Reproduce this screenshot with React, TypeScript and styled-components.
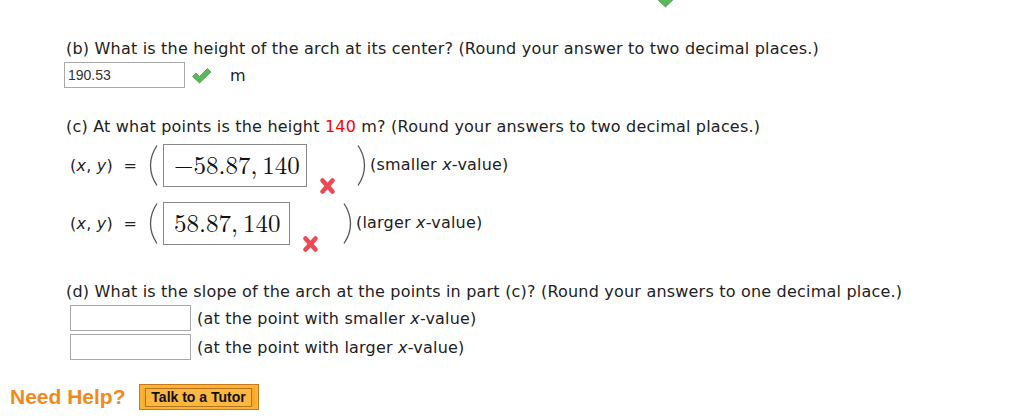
import React from "react";
import styled, { createGlobalStyle } from "styled-components";

const GlobalStyle = createGlobalStyle`
  body {
    margin: 0;
    background: #ffffff;
    font-family: "DejaVu Sans", Verdana, sans-serif;
    color: #222222;
  }
`;

const Page = styled.div`
  width: 1034px;
  height: 420px;
  position: relative;
  overflow: hidden;
`;

const Content = styled.div`
  padding: 39px 0 0 66px;
  font-size: 16px;
  letter-spacing: 0.2px;
  i {
    font-style: italic;
  }
`;

const TopCheck = styled.div`
  position: absolute;
  left: 657px;
  top: -9px;
`;

const Question = styled.div<{ $mt?: number }>`
  line-height: 20px;
  height: 20px;
  white-space: nowrap;
  margin-top: ${(p) => p.$mt ?? 0}px;
`;

const Red = styled.span`
  color: #ff0000;
`;

const AnswerRow = styled.div`
  display: flex;
  align-items: center;
  margin: 3px 0 0 -2px;
  height: 26px;
`;

const TextBox = styled.div<{ $w?: number }>`
  box-sizing: border-box;
  width: ${(p) => p.$w ?? 121}px;
  height: 26px;
  border: 1px solid #a9a9a9;
  font-family: "Liberation Sans", Arial, sans-serif;
  font-size: 14px;
  letter-spacing: 0;
  line-height: 24px;
  padding-left: 3px;
  color: #333333;
`;

const MarkWrap = styled.span`
  display: flex;
  margin-left: 6px;
`;

const Unit = styled.span`
  margin-left: 18px;
`;

const PointRow = styled.div<{ $mt: number }>`
  display: flex;
  align-items: center;
  height: 43px;
  margin: ${(p) => p.$mt}px 0 0 4px;
`;

const PointLabel = styled.div`
  width: 77px;
  white-space: nowrap;
`;

const Paren = styled.div`
  align-self: stretch;
  width: 14px;
  display: flex;
  justify-content: center;
  svg {
    display: block;
  }
`;

const MathBox = styled.div<{ $w: number }>`
  box-sizing: border-box;
  width: ${(p) => p.$w}px;
  height: 43px;
  border: 1px solid #888888;
  font-family: "Latin Modern Roman", "Liberation Serif", serif;
  font-size: 25px;
  letter-spacing: 0;
  line-height: 37px;
  padding-left: 10px;
  color: #111111;
  margin-left: 2px;
  white-space: nowrap;
`;

const MarkSlot = styled.div<{ $w: number }>`
  align-self: stretch;
  width: ${(p) => p.$w}px;
  position: relative;
`;

const CrossSpot = styled.div`
  position: absolute;
  left: 12px;
  top: 33px;
`;

const Hint = styled.div`
  margin-left: 2px;
  margin-top: -2px;
  white-space: nowrap;
`;

const SlopeRow = styled.div`
  display: flex;
  align-items: center;
  margin: 3px 0 0 4px;
`;

const SlopeLabel = styled.span`
  margin-left: 6px;
`;

const HelpBar = styled.div`
  display: flex;
  align-items: center;
  position: absolute;
  left: 10px;
  top: 384px;
`;

const NeedHelp = styled.span`
  font-family: "Liberation Sans", Arial, sans-serif;
  font-weight: bold;
  font-size: 21px;
  color: #f28a1b;
`;

const TutorButton = styled.button`
  margin-left: 13px;
  box-sizing: border-box;
  width: 120px;
  height: 26px;
  background: #f9a928;
  border: 1px solid #c9781c;
  box-shadow: inset 0 0 0 3px #fbb335;
  font-family: "Liberation Sans", Arial, sans-serif;
  font-weight: bold;
  font-size: 14px;
  color: #111111;
  padding: 0;
  display: flex;
  align-items: center;
  justify-content: center;
  span {
    display: block;
    border: 1px solid #b8741d;
    padding: 1px 5px;
    line-height: 15px;
    background: #fcb83e;
  }
`;

const Check = () => (
  <svg width="21" height="17" viewBox="0 0 21 17">
    <path
      d="M1.5 9.5 L5 6 L8.5 9.5 L16.5 1.5 L20 5 L8.5 16 Z"
      fill="#5cb85c"
      stroke="#4a9a4a"
      strokeWidth="0.8"
      strokeLinejoin="round"
    />
  </svg>
);

const Cross = () => (
  <svg width="17" height="18" viewBox="0 0 17 18">
    <g stroke="#ec4a55" strokeWidth="4.6" strokeLinecap="round">
      <line x1="3.5" y1="3.5" x2="13.5" y2="14.5" />
      <line x1="13.5" y1="3.5" x2="3.5" y2="14.5" />
    </g>
  </svg>
);

const BigParen = ({ side }: { side: "left" | "right" }) => (
  <Paren>
    <svg width="10" height="43" viewBox="0 0 10 43">
      <path
        d={
          side === "left"
            ? "M8 1.5 Q1.5 11 1.5 21.5 Q1.5 32 8 41.5"
            : "M2 1.5 Q8.5 11 8.5 21.5 Q8.5 32 2 41.5"
        }
        fill="none"
        stroke="#555555"
        strokeWidth="1.3"
      />
    </svg>
  </Paren>
);

export default function App() {
  return (
    <Page>
      <GlobalStyle />
      <TopCheck>
        <Check />
      </TopCheck>
      <Content>
        <Question>
          (b) What is the height of the arch at its center? (Round your answer
          to two decimal places.)
        </Question>
        <AnswerRow>
          <TextBox $w={121}>190.53</TextBox>
          <MarkWrap>
            <Check />
          </MarkWrap>
          <Unit>m</Unit>
        </AnswerRow>

        <Question $mt={29}>
          (c) At what points is the height <Red>140</Red> m? (Round your
          answers to two decimal places.)
        </Question>
        <PointRow $mt={7}>
          <PointLabel>
            (<i>x</i>, <i>y</i>) &nbsp;=
          </PointLabel>
          <BigParen side="left" />
          <MathBox $w={144}>−58.87,{"\u2009"}140</MathBox>
          <MarkSlot $w={47}>
            <CrossSpot>
              <Cross />
            </CrossSpot>
          </MarkSlot>
          <BigParen side="right" />
          <Hint>
            (smaller <i>x</i>-value)
          </Hint>
        </PointRow>
        <PointRow $mt={15}>
          <PointLabel>
            (<i>x</i>, <i>y</i>) &nbsp;=
          </PointLabel>
          <BigParen side="left" />
          <MathBox $w={127}>58.87,{"\u2009"}140</MathBox>
          <MarkSlot $w={50}>
            <CrossSpot>
              <Cross />
            </CrossSpot>
          </MarkSlot>
          <BigParen side="right" />
          <Hint>
            (larger <i>x</i>-value)
          </Hint>
        </PointRow>

        <Question $mt={37}>
          (d) What is the slope of the arch at the points in part (c)? (Round
          your answers to one decimal place.)
        </Question>
        <SlopeRow>
          <TextBox $w={121} />
          <SlopeLabel>
            (at the point with smaller <i>x</i>-value)
          </SlopeLabel>
        </SlopeRow>
        <SlopeRow>
          <TextBox $w={121} />
          <SlopeLabel>
            (at the point with larger <i>x</i>-value)
          </SlopeLabel>
        </SlopeRow>
      </Content>
      <HelpBar>
        <NeedHelp>Need Help?</NeedHelp>
        <TutorButton>
          <span>Talk to a Tutor</span>
        </TutorButton>
      </HelpBar>
    </Page>
  );
}
